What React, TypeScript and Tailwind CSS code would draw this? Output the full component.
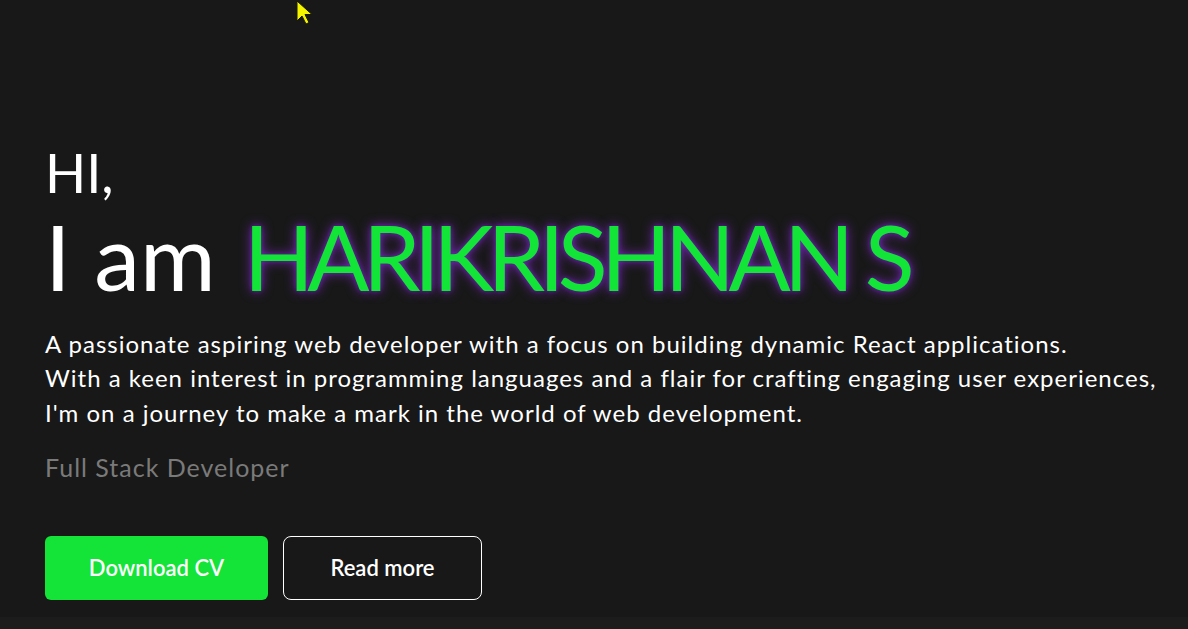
export default function App() {
  return (
    <div
      className="relative w-full overflow-hidden bg-[#181818] text-white"
      style={{ fontFamily: "'Trebuchet MS', Lato, 'Noto Sans', sans-serif" }}
    >
      {/* mouse cursor from the capture */}
      <svg className="absolute left-[296px] top-0" width="18" height="26" viewBox="0 0 18 26" aria-hidden="true">
        <path d="M1 1v20l5-5 4 8 3-1.5-4-8h7z" fill="#f5f500" stroke="#1a1a00" strokeWidth="1" />
      </svg>

      <section className="flex h-[617px] flex-col pl-[45px] pt-[143px]">
        <h2 className="text-[54px] leading-[1.1]">HI,</h2>
        <h1 className="mt-[3px] text-[92px] leading-[1.1]">
          I am
          <span className="ml-[28px] tracking-[-6.6px] text-[#13e438] [text-shadow:0_0_12px_#7b2cbf,0_0_4px_#5b1a9a]">
            HARIKRISHNAN S
          </span>
        </h1>
        <p className="mt-[20px] text-[24px] leading-[34.5px] tracking-[1px]">
          A passionate aspiring web developer with a focus on building dynamic React applications.
          <br />
          With a keen interest in programming languages and a flair for crafting engaging user experiences,
          <br />
          I'm on a journey to make a mark in the world of web development.
        </p>
        <p className="mt-[19px] text-[25px] tracking-[1px] text-[#7a7a7a]">Full Stack Developer</p>
        <div className="mt-[49px] flex gap-[15px]">
          <button className="h-[64px] w-[223px] rounded-[6px] bg-[#13e437] text-[22px] font-semibold text-white">
            Download CV
          </button>
          <button className="h-[64px] w-[199px] rounded-[8px] border border-white bg-transparent text-[22px] font-semibold text-white">
            Read more
          </button>
        </div>
      </section>
      <div className="h-[40px] bg-[#1c1c1c]" />
    </div>
  );
}
